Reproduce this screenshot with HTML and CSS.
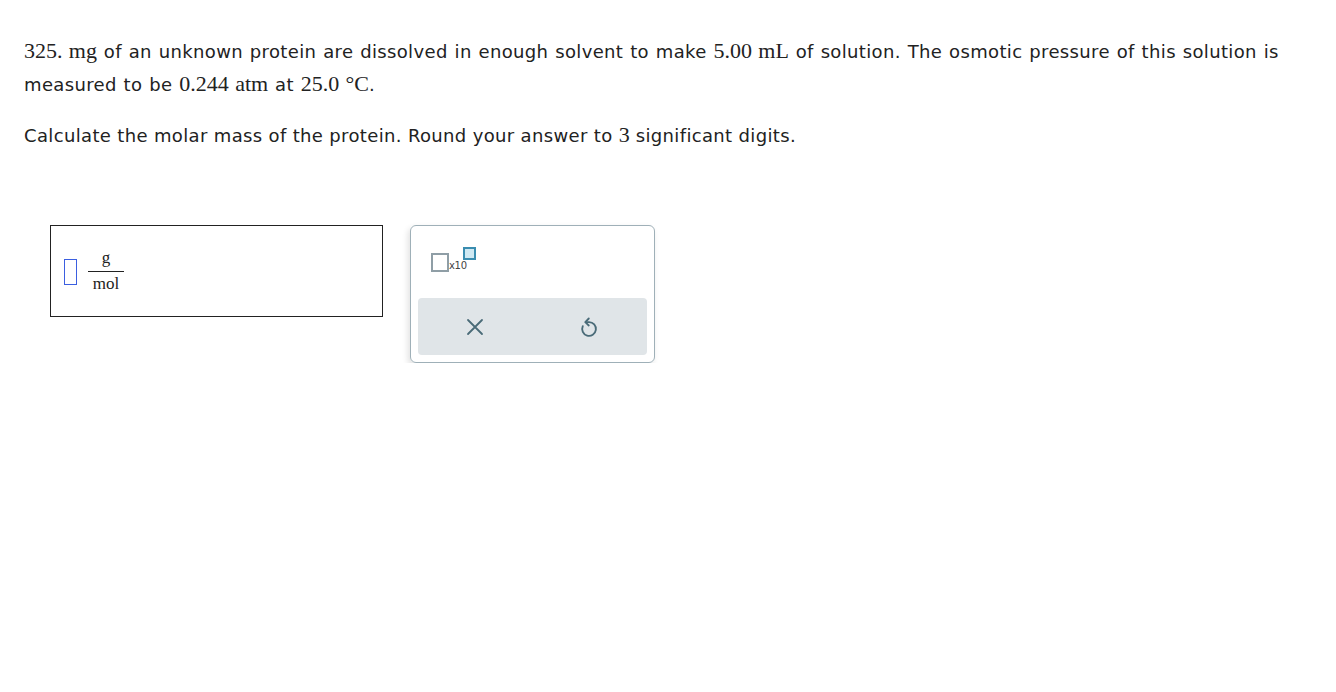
FILE: index.html
```html
<!DOCTYPE html>
<html>
<head>
<meta charset="utf-8">
<link rel="stylesheet" href="styles.css">
</head>
<body>
<div class="page">
  <p class="q q1"><span class="m">325. mg</span> of an unknown protein are dissolved in enough solvent to make <span class="m">5.00 mL</span> of solution. The osmotic pressure of this solution is measured to be <span class="m">0.244 atm</span> at <span class="m">25.0 °C</span>.</p>
  <p class="q q2">Calculate the molar mass of the protein. Round your answer to <span class="m">3</span> significant digits.</p>
  <div class="work">
    <div class="answer">
      <span class="slot"></span>
      <span class="frac"><span class="num">g</span><span class="den">mol</span></span>
    </div>
    <div class="tools">
      <div class="sci">
        <span class="sbox"></span><span class="x10">x10</span><span class="sup"></span>
      </div>
      <div class="btns">
        <svg class="ico" width="20" height="20" viewBox="0 0 20 20"><path d="M3 3 L17 17 M17 3 L3 17" stroke="#4a6b78" stroke-width="1.8" fill="none" stroke-linecap="round"/></svg>
        <svg class="ico" width="22" height="24" viewBox="0 0 20 22"><path d="M7 6.5 L10 6.5 A6.3 6.3 0 1 1 4.3 10.2" stroke="#4a6b78" stroke-width="1.7" fill="none" stroke-linecap="round"/><path d="M9.8 3.2 L6.6 6.5 L9.8 9.6" stroke="#4a6b78" stroke-width="1.7" fill="none" stroke-linecap="round" stroke-linejoin="round"/></svg>
      </div>
    </div>
  </div>
</div>
</body>
</html>
```
FILE: styles.css
```css
html, body { margin: 0; padding: 0; background: #fff; }
body { font-family: "DejaVu Sans", Verdana, sans-serif; color: #222; }
.page { padding: 35px 24px 0 24px; }
.q { margin: 0; font-size: 18px; line-height: 32px; letter-spacing: 0.35px; }
.q1 { word-spacing: 0.8px; }
.q2 { margin-top: 18px; }
.m { font-family: "Liberation Serif", "Times New Roman", serif; font-size: 22px; letter-spacing: 0; }
.work { display: flex; align-items: flex-start; gap: 27px; margin-top: 73px; margin-left: 26px; }
.answer { width: 333px; height: 92px; border: 1px solid #222; display: flex; align-items: center; padding-left: 13px; box-sizing: border-box; }
.slot { width: 11px; height: 24px; border: 1.5px solid #3b5fe0; margin-top: 2px; }
.frac { display: inline-flex; flex-direction: column; align-items: center; margin-left: 11px; font-family: "Liberation Serif", serif; font-size: 17px; color: #222; }
.num { padding: 0 2px 5px; line-height: 16px; border-bottom: 1.3px solid #222; width: 32px; text-align: center; }
.den { line-height: 18px; padding-top: 3px; }
.tools { width: 245px; height: 138px; border: 1px solid #9fb0b8; border-radius: 6px; box-shadow: -2px 3px 6px rgba(0,0,0,0.12); padding: 7px; box-sizing: border-box; display: flex; flex-direction: column; }
.sci { position: relative; height: 65px; }
.sbox { position: absolute; left: 13px; top: 20px; width: 14px; height: 15px; border: 2px solid #8f9ea6; }
.x10 { position: absolute; left: 31px; top: 27px; font-family: "DejaVu Sans", sans-serif; font-size: 10px; color: #444; letter-spacing: -0.3px; }
.sup { position: absolute; left: 45px; top: 14px; width: 9px; height: 9px; border: 2px solid #3a8db0; background: #cfe9f3; }
.btns { background: #e0e5e8; border-radius: 4px; height: 57px; display: flex; align-items: center; justify-content: space-around; }
```
